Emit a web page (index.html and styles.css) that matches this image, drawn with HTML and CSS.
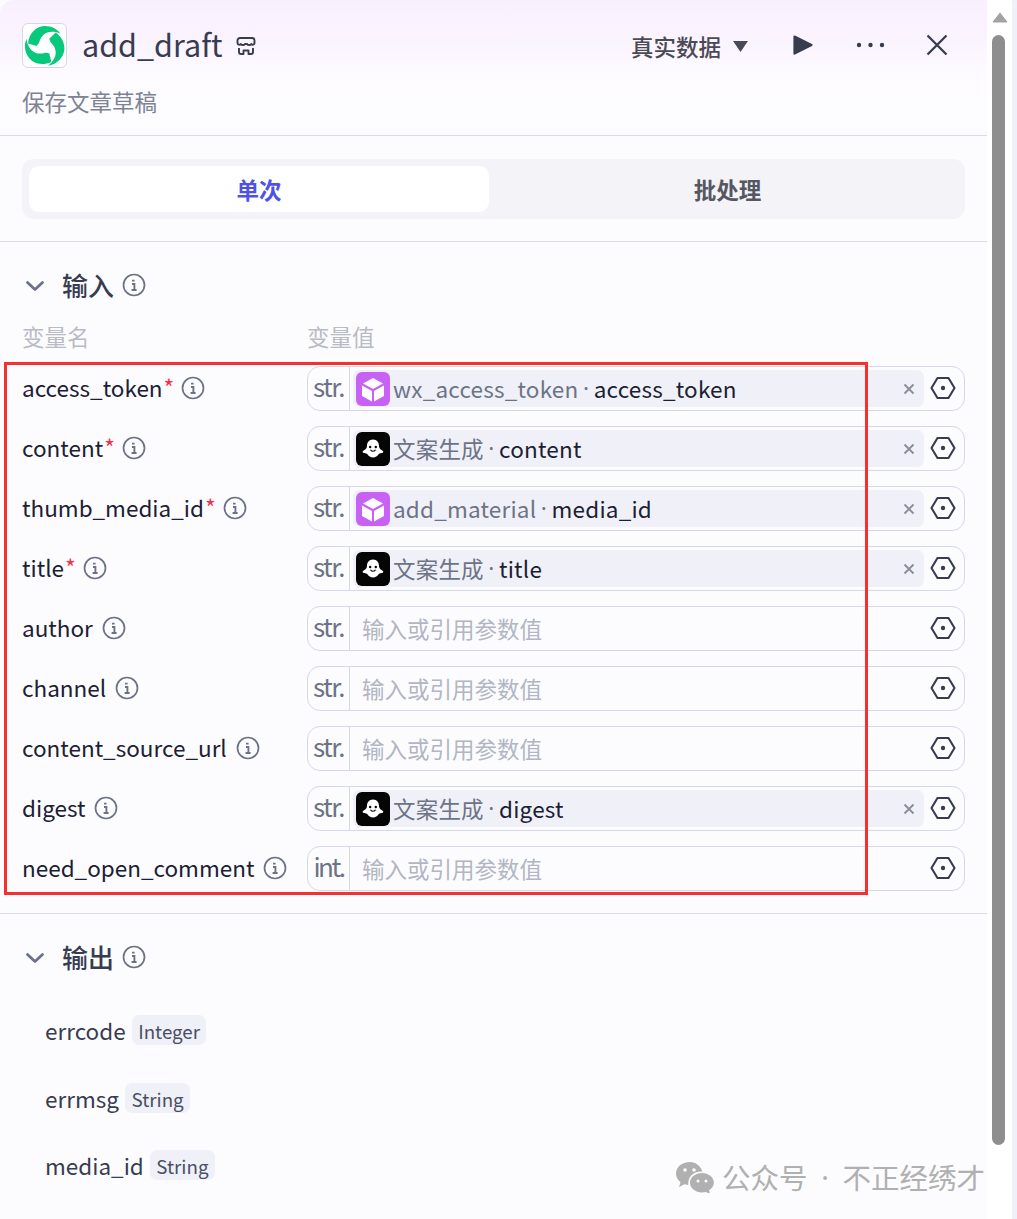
FILE: index.html
```html
<!DOCTYPE html>
<html lang="zh-CN">
<head>
<meta charset="utf-8">
<title>add_draft</title>
<link rel="stylesheet" href="styles.css">
</head>
<body>
<svg class="defs" width="0" height="0" aria-hidden="true">
  <defs>
    <symbol id="info" viewBox="0 0 24 24"><circle cx="12" cy="12" r="10.5" fill="none" stroke="currentColor" stroke-width="1.700"/><path d="M10 7.600h2.600M10 11h2.400v6M9.600 17h5" fill="none" stroke="currentColor" stroke-width="1.900"/></symbol>
    <symbol id="hex" viewBox="0 0 26 24"><path d="M7.500 2h11L24.500 12 18.500 22h-11L1.500 12z" fill="none" stroke="currentColor" stroke-width="2.100" stroke-linejoin="round"/><circle cx="13" cy="12" r="2.200" fill="currentColor"/></symbol>
    <symbol id="chev" viewBox="0 0 20 12"><path d="M2.500 2.500 10 9.500l7.500-7" fill="none" stroke="currentColor" stroke-width="2.800" stroke-linecap="round" stroke-linejoin="round"/></symbol>
    <symbol id="x" viewBox="0 0 12 12"><path d="M1.500 1.500l9 9M10.500 1.500l-9 9" fill="none" stroke="currentColor" stroke-width="1.900"/></symbol>
    <symbol id="cube" viewBox="0 0 34 34"><rect width="34" height="34" rx="6" fill="#c862f5"/><path d="M17 6l10 5.500-10 5.500-10-5.500z" fill="#fff"/><path d="M6 13.500l10 5.500v10.500l-10-5.500z" fill="#fff"/><path d="M28 13.500v10.500l-10 5.500V19z" fill="#fff"/></symbol>
    <symbol id="ghost" viewBox="0 0 34 34"><rect width="34" height="34" rx="6" fill="#050505"/><path d="M17 7.500c-4.200 0-6 3-6 6.500 0 2-1.200 3.300-3 4.300-2 1.200-1.800 2.700.3 2.800 1.700.1 2.700.6 3.500 1.700.9 1.300 2.600 2.700 5.200 2.700s4.300-1.400 5.200-2.700c.8-1.100 1.800-1.600 3.500-1.700 2.100-.1 2.300-1.600.3-2.800-1.800-1-3-2.300-3-4.300 0-3.500-1.800-6.500-6-6.500z" fill="#fff"/><circle cx="14.200" cy="15" r="1.200" fill="#050505"/><circle cx="19.800" cy="15" r="1.200" fill="#050505"/><path d="M14.800 18.200c1.300 1.400 3.100 1.400 4.400 0" fill="none" stroke="#050505" stroke-width="1.200" stroke-linecap="round"/></symbol>
    <symbol id="swirl" viewBox="0 0 42 42"><path d="M4 18.500C5 8 12.500 1 21 1c6.500 0 11.500 2.700 15.500 7.500-6-2.500-12-2.500-16 .5-3 2-4.500 5-5.500 9l-2.500 3z" fill="#07c97c"/></symbol>
  </defs>
</svg>

<div class="window">
  <main class="panel">
    <header class="head">
      <div class="title-row">
        <span class="logo">
          <svg width="42" height="42" viewBox="0 0 42 42"><use href="#swirl"/><use href="#swirl" transform="rotate(120 21 21)"/><use href="#swirl" transform="rotate(240 21 21)"/></svg>
        </span>
        <h1 class="name">add_draft</h1>
        <svg class="store" width="20" height="20" viewBox="0 0 20 20"><path d="M4 2h12a2.500 2.500 0 0 1 2.500 2.500V7c0 1.800-2.400 2.400-3.200 1-.8 1.400-3.500 1.400-4.200 0H9c-.7 1.400-3.400 1.400-4.200 0-.8 1.400-3.300.8-3.300-1V4.500A2.500 2.500 0 0 1 4 2zM3 12v4a2 2 0 0 0 2 2h2.500v-3.500h5V18H15a2 2 0 0 0 2-2v-4" fill="none" stroke="currentColor" stroke-width="1.900" stroke-linejoin="round"/></svg>
        <div class="actions">
          <span class="mode">真实数据</span>
          <svg class="caret" width="15" height="11" viewBox="0 0 15 11"><path d="M0 0h15L7.500 11z" fill="#4a4a55"/></svg>
          <svg class="play" width="20" height="22" viewBox="0 0 20 22"><path d="M1.500 2.500 18.500 11 1.500 19.500z" fill="#383c50" stroke="#383c50" stroke-width="2.200" stroke-linejoin="round"/></svg>
          <svg class="more" width="29" height="6" viewBox="0 0 29 6"><circle cx="3" cy="3" r="2.200" fill="#383c50"/><circle cx="14.500" cy="3" r="2.200" fill="#383c50"/><circle cx="26" cy="3" r="2.200" fill="#383c50"/></svg>
          <svg class="close" width="22" height="22" viewBox="0 0 22 22"><path d="M1.500 1.500l19 19M20.500 1.500l-19 19" fill="none" stroke="#383c50" stroke-width="2.300"/></svg>
        </div>
      </div>
      <p class="desc">保存文章草稿</p>
    </header>

    <div class="tabs-wrap">
      <div class="tabs">
        <div class="tab active">单次</div>
        <div class="tab">批处理</div>
      </div>
    </div>

    <section class="inputs">
      <div class="sec-title">
        <svg class="chev"><use href="#chev"/></svg>
        <span>输入</span>
        <svg class="info big"><use href="#info"/></svg>
      </div>
      <div class="cols"><span class="col-a">变量名</span><span>变量值</span></div>
      <div class="rows">
        <div class="row">
          <div class="label">access_token<i>*</i><svg class="info"><use href="#info"/></svg></div>
          <div class="field"><span class="type">str.</span><div class="value"><div class="chip"><svg class="ico"><use href="#cube"/></svg><span class="src">wx_access_token</span><span class="dot">·</span><span class="var">access_token</span><svg class="rm"><use href="#x"/></svg></div></div><svg class="hex"><use href="#hex"/></svg></div>
        </div>
        <div class="row">
          <div class="label">content<i>*</i><svg class="info"><use href="#info"/></svg></div>
          <div class="field"><span class="type">str.</span><div class="value"><div class="chip"><svg class="ico"><use href="#ghost"/></svg><span class="src">文案生成</span><span class="dot">·</span><span class="var">content</span><svg class="rm"><use href="#x"/></svg></div></div><svg class="hex"><use href="#hex"/></svg></div>
        </div>
        <div class="row">
          <div class="label">thumb_media_id<i>*</i><svg class="info"><use href="#info"/></svg></div>
          <div class="field"><span class="type">str.</span><div class="value"><div class="chip"><svg class="ico"><use href="#cube"/></svg><span class="src">add_material</span><span class="dot">·</span><span class="var">media_id</span><svg class="rm"><use href="#x"/></svg></div></div><svg class="hex"><use href="#hex"/></svg></div>
        </div>
        <div class="row">
          <div class="label">title<i>*</i><svg class="info"><use href="#info"/></svg></div>
          <div class="field"><span class="type">str.</span><div class="value"><div class="chip"><svg class="ico"><use href="#ghost"/></svg><span class="src">文案生成</span><span class="dot">·</span><span class="var">title</span><svg class="rm"><use href="#x"/></svg></div></div><svg class="hex"><use href="#hex"/></svg></div>
        </div>
        <div class="row">
          <div class="label">author<svg class="info"><use href="#info"/></svg></div>
          <div class="field"><span class="type">str.</span><div class="value"><span class="ph">输入或引用参数值</span></div><svg class="hex"><use href="#hex"/></svg></div>
        </div>
        <div class="row">
          <div class="label">channel<svg class="info"><use href="#info"/></svg></div>
          <div class="field"><span class="type">str.</span><div class="value"><span class="ph">输入或引用参数值</span></div><svg class="hex"><use href="#hex"/></svg></div>
        </div>
        <div class="row">
          <div class="label">content_source_url<svg class="info"><use href="#info"/></svg></div>
          <div class="field"><span class="type">str.</span><div class="value"><span class="ph">输入或引用参数值</span></div><svg class="hex"><use href="#hex"/></svg></div>
        </div>
        <div class="row">
          <div class="label">digest<svg class="info"><use href="#info"/></svg></div>
          <div class="field"><span class="type">str.</span><div class="value"><div class="chip"><svg class="ico"><use href="#ghost"/></svg><span class="src">文案生成</span><span class="dot">·</span><span class="var">digest</span><svg class="rm"><use href="#x"/></svg></div></div><svg class="hex"><use href="#hex"/></svg></div>
        </div>
        <div class="row">
          <div class="label">need_open_comment<svg class="info"><use href="#info"/></svg></div>
          <div class="field"><span class="type narrow">int.</span><div class="value"><span class="ph">输入或引用参数值</span></div><svg class="hex"><use href="#hex"/></svg></div>
        </div>
      </div>
      <div class="highlight"></div>
    </section>

    <section class="outputs">
      <div class="sec-title">
        <svg class="chev"><use href="#chev"/></svg>
        <span>输出</span>
        <svg class="info big"><use href="#info"/></svg>
      </div>
      <ul class="out-list">
        <li><span>errcode</span><b>Integer</b></li>
        <li><span>errmsg</span><b>String</b></li>
        <li><span>media_id</span><b>String</b></li>
      </ul>
    </section>

    <div class="mark">
      <svg width="40" height="32" viewBox="0 0 40 32"><path d="M15 1C7 1 1 6 1 12.500c0 3.500 1.800 6.500 4.500 8.800L4 26l5.500-2.800c1.300.4 2.500.6 3.800.7C12.500 16 18.500 10 27.500 10.500 25.500 5 20.800 1 15 1z" fill="#b0b0b0"/><path d="M27 12c-6.500 0-12 4.300-12 9.700s5.500 9.700 12 9.700c1.300 0 2.600-.2 3.800-.5l4.400 2.100-1.200-3.800c2.900-1.800 4.900-4.500 4.900-7.500C38.900 16.300 33.500 12 27 12z" fill="#b0b0b0"/><circle cx="10" cy="9" r="1.800" fill="#fcfcff"/><circle cx="19" cy="9" r="1.800" fill="#fcfcff"/><circle cx="23" cy="20" r="1.500" fill="#fcfcff"/><circle cx="31" cy="20" r="1.500" fill="#fcfcff"/></svg>
      <span class="mark-a">公众号</span><span class="mark-dot">·</span><span>不正经绣才</span>
    </div>
  </main>

  <aside class="scrollbar">
    <svg width="16" height="11" viewBox="0 0 16 11"><path d="M8 1l7 9H1z" fill="#a3a3a3" stroke="#a3a3a3" stroke-linejoin="round"/></svg>
    <div class="thumb"></div>
  </aside>
</div>
</body>
</html>
```
FILE: styles.css
```css
* { box-sizing: border-box; }
html, body { margin: 0; height: 100%; overflow: hidden; }
body {
  width: 1017px;
  height: 1219px;
  font-family: "Noto Sans CJK SC", "Noto Sans", sans-serif;
  background: #fcfcff;
  color: #1c2033;
}
.defs { position: absolute; }
.window { display: flex; height: 1219px; }
.panel {
  position: relative;
  width: 987px;
  background: #fcfcff;
  border-top-left-radius: 14px;
  overflow: hidden;
}
.head {
  height: 136px;
  padding: 23px 22px 0 22px;
  border-bottom: 1px solid #dcdde3;
  background: linear-gradient(180deg, #f9f0fe 0, #fbf5ff 50px, #fdfbff 75px, #fcfcff 136px);
}
.title-row { display: flex; align-items: center; height: 45px; }
.logo {
  width: 45px;
  height: 45px;
  border: 1.500px solid #d5d8e2;
  border-radius: 6px;
  background: #fff;
  display: flex;
  align-items: center;
  justify-content: center;
  flex: none;
  overflow: hidden;
}
.name {
  margin: -3px 0 0 15px;
  font-size: 30.500px;
  font-weight: 400;
  line-height: 45px;
  color: #383c50;
}
.store { margin: 0 0 0 13px; color: #383c50; }
.actions { margin: -2px 0 0 auto; display: flex; align-items: center; padding-right: 17px; }
.mode { font-size: 22.500px; line-height: 30px; color: #4a4a55; font-weight: 500; margin-top: 3px; }
.caret { margin: 4px 0 0 12px; }
.play { margin: 0 0 0 45px; }
.more { margin: 0 0 0 43px; }
.close { margin: 0 0 0 41px; }
.desc { margin: 18px 0 0; font-size: 22.500px; line-height: 30px; color: #7d8393; }

.tabs-wrap { height: 106px; padding: 23px 22px 0; border-bottom: 1px solid #dcdde3; }
.tabs {
  display: flex;
  height: 60px;
  padding: 7px;
  background: #f3f3f8;
  border-radius: 12px;
}
.tab {
  flex: 1;
  text-align: center;
  font-size: 22.500px;
  font-weight: 700;
  line-height: 45px;
  padding-top: 1px;
  color: #555763;
  border-radius: 10px;
}
.tab.active { flex: none; width: 460px; background: #fff; color: #4d53e8; }
.tab + .tab { padding-left: 8px; }

.inputs { position: relative; height: 672px; padding: 24px 22px 0; border-bottom: 1px solid #dcdde3; }
.sec-title {
  display: flex;
  align-items: center;
  height: 40px;
  font-size: 26px;
  font-weight: 500;
  color: #383c50;
}
.sec-title span { margin-top: -4px; }
.chev { width: 20px; height: 12px; margin: 0 17px 0 3px; color: #6b7186; }
.info { width: 24px; height: 24px; margin: 1px 0 0 9px; color: #6b7186; flex: none; }
.info.big { margin-left: 8px; margin-top: -2px; }
.cols {
  display: flex;
  margin-top: 15px;
  font-size: 22.500px;
  line-height: 30px;
  color: #b9bbc4;
}
.col-a { width: 285px; }
.rows { display: flex; flex-direction: column; gap: 15px; margin-top: 15px; }
.row { display: flex; align-items: center; height: 45px; }
.label {
  width: 285px;
  display: flex;
  align-items: center;
  font-size: 22.500px;
  line-height: 30px;
  color: #1c2033;
  margin-top: -3px;
}
.label i { font-style: normal; color: #f5304f; margin: 0 -1px 0 1px; align-self: flex-start; font-size: 23px; }
.label i + .info { margin-left: 8px; }
.field {
  flex: 1;
  height: 45px;
  display: flex;
  align-items: stretch;
  border: 1.500px solid #d5d8e6;
  border-radius: 13px;
  position: relative;
}
.type {
  width: 42px;
  border-right: 1.500px solid #d5d8e6;
  font-size: 26px;
  letter-spacing: -1.500px;
  color: #6d7386;
  text-align: center;
  line-height: 38px;
  flex: none;
}
.type.narrow { letter-spacing: -2.500px; }
.value { flex: 1; display: flex; align-items: center; padding: 3px 0 3px 3px; min-width: 0; }
.chip {
  flex: none;
  width: 571px;
  height: 37px;
  padding-bottom: 2px;
  display: flex;
  align-items: center;
  position: relative;
  background: #f0f1f8;
  border-radius: 7px;
  font-size: 22.500px;
  letter-spacing: .2px;
  white-space: nowrap;
}
.ico { width: 34px; height: 34px; margin: 2px 0 0 3px; flex: none; }
.src { margin-left: 3px; color: #6d7386; }
.dot { color: #6d7386; margin: 0 4.500px; font-family: "Noto Sans", sans-serif; }
.var { color: #1c2033; }
.rm { position: absolute; right: 9px; top: 13px; width: 12px; height: 12px; color: #8b8e99; }
.ph { margin: -1px 0 0 9px; font-size: 22.500px; color: #b2b5c2; }
.hex { width: 26px; height: 24px; color: #383c50; position: absolute; right: 8px; top: 9px; }
.highlight {
  position: absolute;
  left: 4px;
  top: 120px;
  width: 864px;
  height: 533px;
  border: 3px solid #f5302f;
  pointer-events: none;
}

.outputs { padding: 24px 22px 0; }
.out-list { list-style: none; margin: 37px 0 0; padding: 0 0 0 23px; display: flex; flex-direction: column; gap: 37.500px; }
.out-list li { display: flex; align-items: center; height: 30px; font-size: 22.500px; color: #383c50; }
.out-list b {
  margin-left: 6.500px;
  padding: 0 6px;
  height: 30px;
  line-height: 32px;
  font-size: 18.750px;
  font-weight: 400;
  background: #f0f1f8;
  border-radius: 7px;
  color: #4a4f64;
}
.mark {
  position: absolute;
  left: 675px;
  top: 1159px;
  display: flex;
  align-items: center;
  font-size: 28.500px;
  color: #b0b0b0;
  white-space: nowrap;
  line-height: 36px;
}
.mark-a { margin-left: 7px; }
.mark-dot { width: 35px; text-align: center; font-family: "Noto Sans", sans-serif; }

.scrollbar {
  width: 30px;
  background: #fff;
  border-top-right-radius: 14px;
  padding: 12px 0 0 5px;
  position: relative;
}
.scrollbar::after { content: ""; position: absolute; right: 0; top: 0; bottom: 0; width: 5px; background: #f0f1f6; }
.scrollbar svg { display: block; }
.thumb { width: 13px; height: 1110px; margin: 12px 0 0 0; background: #8e8e8e; border-radius: 7px; }
```
